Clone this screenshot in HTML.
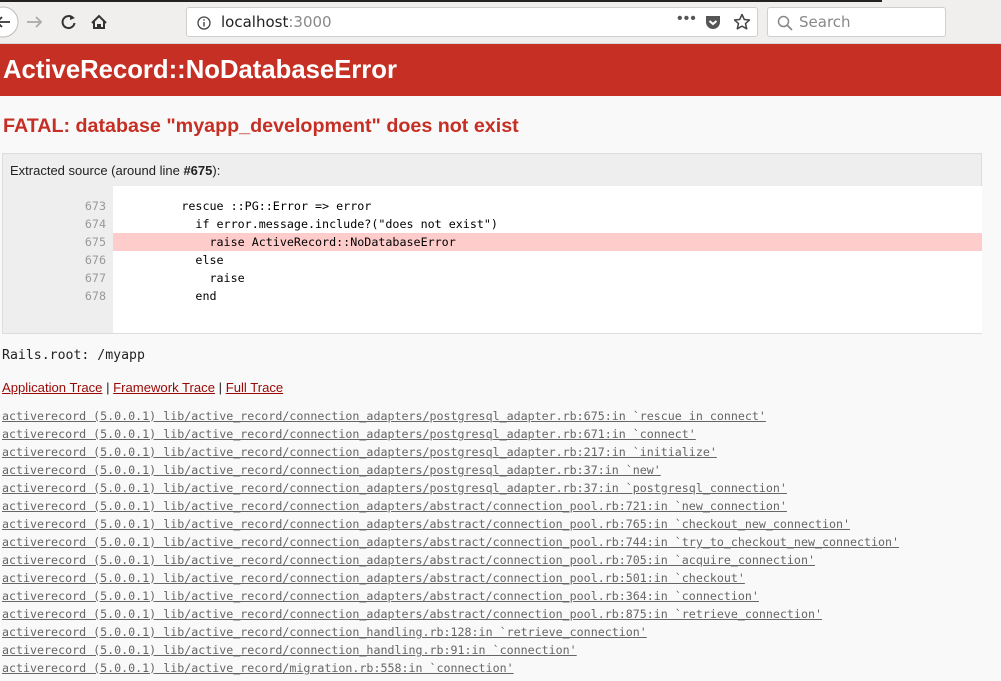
<!DOCTYPE html>
<html><head><meta charset="utf-8"><style>
*{margin:0;padding:0;box-sizing:border-box}
body{width:1001px;height:681px;overflow:hidden;background:#f9f9f9;font-family:"Liberation Sans",sans-serif;position:relative}
.tb{position:absolute;left:0;top:0;width:1001px;height:44px;background:#f0efee;border-bottom:1px solid #d6d6d6}
.tb .line{position:absolute;left:0;top:0;width:882px;height:2px;background:#222}
.url{position:absolute;left:186px;top:7px;width:572px;height:30px;background:#fff;border:1px solid #cfcfcf;border-radius:3px}
.srch{position:absolute;left:767px;top:7px;width:179px;height:30px;background:#fff;border:1px solid #cfcfcf;border-radius:3px}
.ub{font-family:"DejaVu Sans",sans-serif;font-size:15px}
.hdr{position:absolute;left:0;top:44px;width:1001px;height:52px;background:#c52f24;color:#fff;font-weight:bold;font-size:25.7px;padding:12px 0 0 3px}
h2{position:absolute;left:3px;top:115px;color:#c52f24;font-size:19.7px;font-weight:bold}
.src{position:absolute;left:2px;top:153px;width:980px;height:181px;background:#eee;border:1px solid #ddd}
.src .cap{position:absolute;left:7px;top:9px;font-size:13px;color:#222}
.nums{position:absolute;left:0;top:32px;width:110px;height:148px;color:#999;text-align:right;padding-right:7px}
.code{position:absolute;left:110px;top:32px;width:869px;height:147px;background:#fff}
.mono{font-family:"DejaVu Sans Mono",monospace;font-size:11.7px;line-height:18px}
.nums div,.code div{height:18px;white-space:pre}
.nums{padding-top:11px}.code{padding-top:11px;padding-left:0}
.code div{margin-left:-5px;padding-left:5px}
.hl{background:#fcc}
.root{position:absolute;left:2px;top:348px;font-family:"DejaVu Sans Mono",monospace;font-size:13.2px;color:#222}
.links{position:absolute;left:2px;top:380px;font-size:13.1px;color:#222}
.links a{color:#980905;text-decoration:underline}
.tr{position:absolute;left:2px;top:407px;font-family:"DejaVu Sans Mono",monospace;font-size:11.65px;line-height:18px;color:#666}
.tr div{text-decoration:underline;white-space:pre}
</style></head><body>
<div class="tb"><div class="line"></div>
<svg style="position:absolute;left:0;top:6px" width="120" height="32"><circle cx="3" cy="16" r="15" fill="#fff" stroke="#bbb"/><path d="M-2 16h12M2 11l-5 5 5 5" stroke="#333" stroke-width="1.8" fill="none"/><path d="M27 16h14M36 11l5 5-5 5" stroke="#aaa" stroke-width="1.8" fill="none"/><path d="M73 12a6 6 0 1 0 1.5 5" stroke="#333" stroke-width="2" fill="none"/><path d="M70 9l5 3-5 2z" fill="#333"/><path d="M92 17l7-7 7 7M94 15v7h10v-7" stroke="#333" stroke-width="2" fill="none"/><rect x="97" y="18" width="4" height="4" fill="#333"/></svg>
<div class="url"><svg style="position:absolute;left:10px;top:8px" width="14" height="14"><circle cx="7" cy="7" r="6" fill="none" stroke="#444" stroke-width="1.3"/><rect x="6.3" y="6" width="1.4" height="4.5" fill="#444"/><rect x="6.3" y="3.3" width="1.4" height="1.4" fill="#444"/></svg><span class="ub" style="position:absolute;left:34px;top:5px;color:#222">localhost<span style="color:#888">:3000</span></span>
<span style="position:absolute;left:490px;top:2px;color:#555;font-size:16px;letter-spacing:1px">•••</span>
<svg style="position:absolute;left:518px;top:6px" width="16" height="16"><path d="M1 2h14v6a7 7 0 0 1-14 0z" fill="#555"/><path d="M4.5 7l3.5 3 3.5-3" stroke="#fff" stroke-width="2" fill="none"/></svg>
<svg style="position:absolute;left:546px;top:5px" width="18" height="18"><path d="M9 1.5l2.3 5 5.2.5-4 3.6 1.2 5.2L9 13.1l-4.7 2.7 1.2-5.2-4-3.6 5.2-.5z" fill="none" stroke="#444" stroke-width="1.5" stroke-linejoin="round"/></svg></div>
<div class="srch"><svg style="position:absolute;left:9px;top:7px" width="16" height="16"><circle cx="6.5" cy="6.5" r="5" fill="none" stroke="#888" stroke-width="1.5"/><path d="M10 10l5 5" stroke="#888" stroke-width="1.6"/></svg><span class="ub" style="position:absolute;left:31px;top:5px;color:#888">Search</span></div>
</div>
<div class="hdr">ActiveRecord::NoDatabaseError</div>
<h2>FATAL: database "myapp_development" does not exist</h2>
<div class="src"><div class="cap">Extracted source (around line <b>#675</b>):</div>
<div class="nums mono"><div>673</div><div>674</div><div>675</div><div>676</div><div>677</div><div>678</div></div>
<div class="code mono" style="padding-left:5px"><div>         rescue ::PG::Error =&gt; error</div><div>           if error.message.include?("does not exist")</div><div class="hl">             raise ActiveRecord::NoDatabaseError</div><div>           else</div><div>             raise</div><div>           end</div></div></div>
<div class="root">Rails.root: /myapp</div>
<div class="links"><a>Application Trace</a> | <a>Framework Trace</a> | <a>Full Trace</a></div>
<div class="tr">
<div>activerecord (5.0.0.1) lib/active_record/connection_adapters/postgresql_adapter.rb:675:in `rescue in connect'</div>
<div>activerecord (5.0.0.1) lib/active_record/connection_adapters/postgresql_adapter.rb:671:in `connect'</div>
<div>activerecord (5.0.0.1) lib/active_record/connection_adapters/postgresql_adapter.rb:217:in `initialize'</div>
<div>activerecord (5.0.0.1) lib/active_record/connection_adapters/postgresql_adapter.rb:37:in `new'</div>
<div>activerecord (5.0.0.1) lib/active_record/connection_adapters/postgresql_adapter.rb:37:in `postgresql_connection'</div>
<div>activerecord (5.0.0.1) lib/active_record/connection_adapters/abstract/connection_pool.rb:721:in `new_connection'</div>
<div>activerecord (5.0.0.1) lib/active_record/connection_adapters/abstract/connection_pool.rb:765:in `checkout_new_connection'</div>
<div>activerecord (5.0.0.1) lib/active_record/connection_adapters/abstract/connection_pool.rb:744:in `try_to_checkout_new_connection'</div>
<div>activerecord (5.0.0.1) lib/active_record/connection_adapters/abstract/connection_pool.rb:705:in `acquire_connection'</div>
<div>activerecord (5.0.0.1) lib/active_record/connection_adapters/abstract/connection_pool.rb:501:in `checkout'</div>
<div>activerecord (5.0.0.1) lib/active_record/connection_adapters/abstract/connection_pool.rb:364:in `connection'</div>
<div>activerecord (5.0.0.1) lib/active_record/connection_adapters/abstract/connection_pool.rb:875:in `retrieve_connection'</div>
<div>activerecord (5.0.0.1) lib/active_record/connection_handling.rb:128:in `retrieve_connection'</div>
<div>activerecord (5.0.0.1) lib/active_record/connection_handling.rb:91:in `connection'</div>
<div>activerecord (5.0.0.1) lib/active_record/migration.rb:558:in `connection'</div>
</div>
</body></html>
